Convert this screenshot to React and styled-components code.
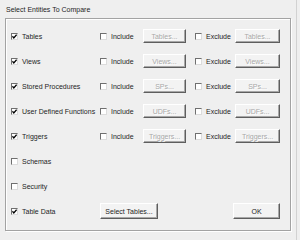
import React from "react";
import styled, { createGlobalStyle } from "styled-components";

const GlobalStyle = createGlobalStyle`
  html, body {
    margin: 0;
    padding: 0;
    background: #efefef;
    width: 300px;
    height: 240px;
    overflow: hidden;
  }
  body {
    font-family: "Liberation Sans", Arial, sans-serif;
    font-size: 7px;
    color: #1e1e1e;
  }
`;

const Window = styled.div`
  box-sizing: border-box;
  width: 297px;
  height: 240px;
  padding-top: 5px;
  border-right: 1px solid #d2d2d2;
`;

const Title = styled.div`
  height: 9px;
  line-height: 9px;
  margin: 0 0 4px 6px;
  white-space: nowrap;
`;

const Panel = styled.div`
  box-sizing: border-box;
  margin-left: 5px;
  width: 286px;
  height: 213px;
  padding: 4.5px 0 0 5px;
  border: 1px solid #a3a3a3;
  box-shadow: inset 1px 1px 0 #ffffff, 1px 1px 0 #ffffff;
`;

const Row = styled.div`
  display: grid;
  grid-template-columns: 89px 43px 43px 49px 45px;
  height: 25px;
  align-items: center;
`;

const CheckWrap = styled.label`
  display: flex;
  align-items: center;
  gap: 4px;
  white-space: nowrap;
  padding-left: ${(p) => p.$indent || 0}px;
`;

const Box = styled.span`
  box-sizing: border-box;
  flex: none;
  width: 7px;
  height: 7px;
  background: #ffffff;
  border-top: 1px solid #6f6f6f;
  border-left: 1px solid #6f6f6f;
  border-right: 1px solid #dcdcdc;
  border-bottom: 1px solid #dcdcdc;
  display: flex;
  align-items: center;
  justify-content: center;
`;

const Label = styled.span`
  line-height: 9px;
`;

const Button = styled.button`
  box-sizing: border-box;
  width: ${(p) => (p.$w ? `${p.$w}px` : "100%")};
  height: ${(p) => p.$h || 14}px;
  margin: 0 0 0 ${(p) => p.$ml || 0}px;
  padding: 0;
  font-family: "Liberation Sans", Arial, sans-serif;
  font-size: 7px;
  line-height: 9px;
  color: ${(p) => (p.disabled ? "#a8a8a8" : "#1e1e1e")};
  text-shadow: ${(p) => (p.disabled ? "1px 1px 0 #ffffff" : "none")};
  background: #f3f3f3;
  border-top: 1px solid #ffffff;
  border-left: 1px solid #ffffff;
  border-right: 1px solid #5e5e5e;
  border-bottom: 1px solid #5e5e5e;
  box-shadow: inset -1px -1px 0 #a8a8a8;
  grid-column: ${(p) => p.$col || "auto"};
`;

const Check = ({ checked, label, indent }) => (
  <CheckWrap $indent={indent}>
    <Box>
      {checked && (
        <svg width="5" height="5" viewBox="0 0 5 5">
          <polyline
            points="0.4,2.3 1.8,3.9 4.6,0.6"
            fill="none"
            stroke="#000"
            strokeWidth="1.3"
          />
        </svg>
      )}
    </Box>
    <Label>{label}</Label>
  </CheckWrap>
);

const entities = [
  { name: "Tables", btn: "Tables..." },
  { name: "Views", btn: "Views..." },
  { name: "Stored Procedures", btn: "SPs..." },
  { name: "User Defined Functions", btn: "UDFs..." },
  { name: "Triggers", btn: "Triggers..." },
];

export default function App() {
  return (
    <>
      <GlobalStyle />
      <Window>
        <Title>Select Entities To Compare</Title>
        <Panel>
          {entities.map((e) => (
            <Row key={e.name}>
              <Check checked label={e.name} />
              <Check label="Include" />
              <Button disabled>{e.btn}</Button>
              <Check label="Exclude" indent={9} />
              <Button disabled>{e.btn}</Button>
            </Row>
          ))}
          <Row>
            <Check label="Schemas" />
          </Row>
          <Row>
            <Check label="Security" />
          </Row>
          <Row>
            <Check checked label="Table Data" />
            <Button $col="2 / span 2" $w={58} $h={16}>
              Select Tables...
            </Button>
            <Button $col="5" $w={47} $h={16} $ml={-2}>
              OK
            </Button>
          </Row>
        </Panel>
      </Window>
    </>
  );
}
